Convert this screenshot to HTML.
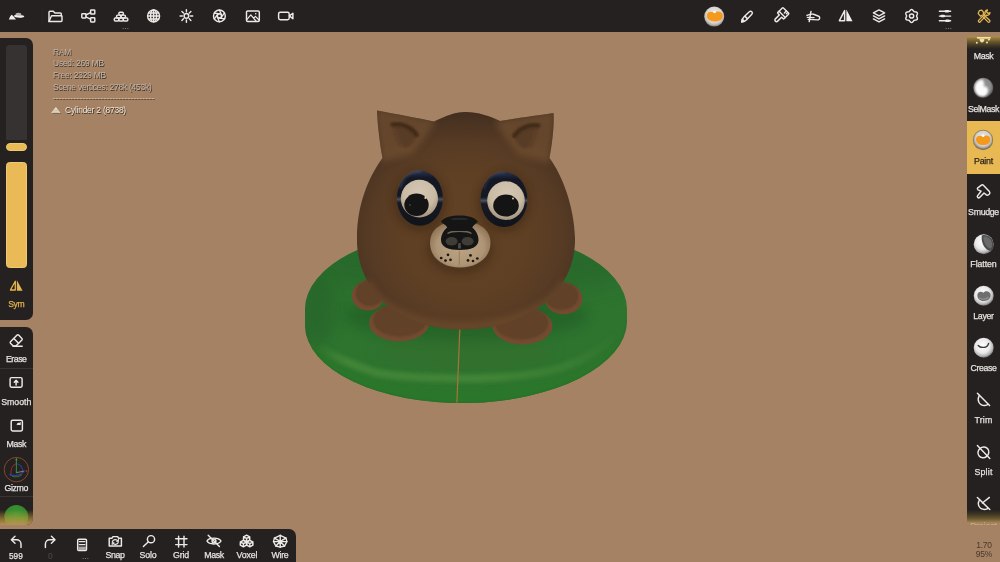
<!DOCTYPE html>
<html lang="en">
<head>
<meta charset="utf-8">
<title>Nomad Sculpt</title>
<style>
*{box-sizing:border-box;margin:0;padding:0}
html,body{width:1000px;height:562px;overflow:hidden}
body{background:#a68264;font-family:"Liberation Sans",sans-serif;position:relative;color:#e4e0dc}
.abs{position:absolute}
#topbar{left:0;top:0;width:1000px;height:32.3px;background:#242120}
#topbar svg{position:absolute;overflow:visible}
.dots{position:absolute;will-change:transform;font-size:8px;line-height:8px;color:#b5b1ad;letter-spacing:0.2px}
#lp1{left:0;top:38px;width:32.6px;height:282px;background:#242120;border-radius:0 7px 7px 0}
#lp2{left:0;top:327px;width:32.6px;height:198px;background:#242120;border-radius:0 7px 7px 0;overflow:hidden}
#bbar{left:0;top:529px;width:296px;height:33px;background:#242120;border-radius:0 7px 0 0}
#rp{left:967px;top:36px;width:33px;height:489px;background:#242120;overflow:hidden}
.lbl{position:absolute;will-change:transform;-webkit-text-stroke:0.25px currentColor;font-size:9.5px;line-height:11px;text-align:center;white-space:nowrap;color:#e6e2de;letter-spacing:-0.15px}
.bl{font-size:8.8px;letter-spacing:-0.42px}
.info{position:absolute;will-change:transform;left:53px;font-size:8.5px;line-height:11px;color:#bfb3a6;text-shadow:0.7px 0.8px 0 #3a2e25;white-space:nowrap;letter-spacing:-0.25px}
svg.ic{position:absolute;overflow:visible}
.st{fill:none;stroke:#ece9e6;stroke-width:1.45;stroke-linecap:round;stroke-linejoin:round}
.fl{fill:#f2f0ee;stroke:none}
</style>
</head>
<body>

<!-- 3D MODEL -->
<svg id="model" class="abs" style="left:0;top:0" width="1000" height="562" viewBox="0 0 1000 562">
<defs>
  <filter id="b1" x="-10%" y="-10%" width="120%" height="120%"><feGaussianBlur stdDeviation="0.6"/></filter>
  <filter id="b15" x="-20%" y="-20%" width="140%" height="140%"><feGaussianBlur stdDeviation="1.2"/></filter>
  <filter id="b2" x="-20%" y="-20%" width="140%" height="140%"><feGaussianBlur stdDeviation="2"/></filter>
  <filter id="b3" x="-20%" y="-20%" width="140%" height="140%"><feGaussianBlur stdDeviation="3.5"/></filter>
  <filter id="b5" x="-30%" y="-30%" width="160%" height="160%"><feGaussianBlur stdDeviation="6"/></filter>
  <filter id="b10" x="-30%" y="-30%" width="160%" height="160%"><feGaussianBlur stdDeviation="12"/></filter>
  <radialGradient id="bodyG" gradientUnits="userSpaceOnUse" cx="466" cy="235" r="122">
    <stop offset="0" stop-color="#624225"/>
    <stop offset="0.5" stop-color="#5f4024"/>
    <stop offset="0.78" stop-color="#573b24"/>
    <stop offset="0.92" stop-color="#4e3623"/>
    <stop offset="1" stop-color="#463122"/>
  </radialGradient>
  <radialGradient id="bodyV" gradientUnits="userSpaceOnUse" cx="466" cy="100" r="75" gradientTransform="translate(466 100) scale(1 0.6) translate(-466 -100)">
    <stop offset="0" stop-color="#3e2a1c" stop-opacity="0.5"/>
    <stop offset="0.5" stop-color="#3e2a1c" stop-opacity="0.25"/>
    <stop offset="1" stop-color="#3e2a1c" stop-opacity="0"/>
  </radialGradient>
  <radialGradient id="whiteG" cx="0.5" cy="0.35" r="0.7">
    <stop offset="0" stop-color="#d4c7b3"/>
    <stop offset="0.6" stop-color="#cabba5"/>
    <stop offset="1" stop-color="#9b8a73"/>
  </radialGradient>
  <linearGradient id="ringG" x1="0" y1="0" x2="0" y2="1">
    <stop offset="0" stop-color="#2a3450"/>
    <stop offset="0.13" stop-color="#141824"/>
    <stop offset="0.46" stop-color="#151923"/>
    <stop offset="0.52" stop-color="#4a505c"/>
    <stop offset="0.58" stop-color="#171a24"/>
    <stop offset="1" stop-color="#11131a"/>
  </linearGradient>
  <radialGradient id="snoutG" cx="0.5" cy="0.55" r="0.6">
    <stop offset="0" stop-color="#bda584"/>
    <stop offset="0.65" stop-color="#ae9575"/>
    <stop offset="1" stop-color="#86694b"/>
  </radialGradient>
  <linearGradient id="hlG" gradientUnits="userSpaceOnUse" x1="316" y1="0" x2="618" y2="0">
    <stop offset="0" stop-color="#488a3a" stop-opacity="0"/>
    <stop offset="0.1" stop-color="#488a3a" stop-opacity="0.9"/>
    <stop offset="0.55" stop-color="#488a3a" stop-opacity="0.9"/>
    <stop offset="0.85" stop-color="#468838" stop-opacity="0.55"/>
    <stop offset="1" stop-color="#468838" stop-opacity="0"/>
  </linearGradient>
  <clipPath id="bodyClip"><path d="M465,112 C478,112 490,116 500,121 C518,118 540,115 553.5,113 C554.5,125 552,145 549.5,158 C562,175 574,205 575,238 C576,290 530,329.5 462,329.5 C398,329.5 356,290 357,238 C357,205 368,178 382.5,158 C380,145 377.5,125 377,110.5 C395,114 418,118 434,121.5 C446,116 455,112 465,112 Z"/></clipPath>
  <clipPath id="padClip"><ellipse cx="466" cy="309" rx="161" ry="80"/><rect x="305" y="309" width="322" height="13"/><ellipse cx="466" cy="323" rx="161" ry="80" transform="rotate(-1 466 323)"/></clipPath>
</defs>

<!-- lily pad -->
<g id="pad">
  <g clip-path="url(#padClip)">
    <rect x="300" y="225" width="332" height="182" fill="#2e742f"/>
    <!-- side face (below highlight) -->
    <path d="M300,338 C318,352 340,366 375,378 C405,386 435,388 466,388 C500,388 530,385 560,377 C592,366 615,350 632,332 L632,410 L300,410 Z" fill="#2c762c" filter="url(#b2)"/>
    <!-- darker back / left -->
    <ellipse cx="466" cy="258" rx="175" ry="40" fill="#27662b" opacity="0.7" filter="url(#b10)"/>
    <ellipse cx="316" cy="310" rx="20" ry="36" fill="#25642a" opacity="0.6" filter="url(#b5)"/>
    <!-- front centre slightly olive -->
    <ellipse cx="466" cy="352" rx="90" ry="18" fill="#366e2d" opacity="0.6" filter="url(#b5)"/>
    <!-- rim highlight -->
    <path d="M319,346 C325,351 332,355 342.4,359.800 C356,366 366,369.500 374.800,372.200 C395,377 430,378.500 466,378.500 C500,378.500 530,376 557,369 C572,364.500 590,356 604,346 C609,342 613,338 616,334" fill="none" stroke="url(#hlG)" stroke-width="8" opacity="0.9" filter="url(#b2)"/>
    <!-- bottom dark edge -->
    <path d="M303,324 A162,81 0 0 0 629,324" transform="rotate(-1 466 323)" fill="none" stroke="#245f26" stroke-width="4" opacity="0.6" filter="url(#b15)"/>
    <!-- contact shadow under body -->
    <ellipse cx="466" cy="316" rx="122" ry="24" fill="#1d5524" opacity="0.45" filter="url(#b5)"/>
  </g>
  <path d="M459.800,329 L456.900,402.500" stroke="#a8733a" stroke-width="1.2" fill="none"/>
</g>

<!-- back feet -->
<g id="feet">
  <ellipse cx="368" cy="295.6" rx="16.2" ry="15" fill="#744b31"/>
  <ellipse cx="370" cy="293" rx="14.5" ry="13" fill="#5e4028" opacity="0.9" filter="url(#b15)"/>
  <ellipse cx="563.5" cy="298.5" rx="19" ry="15.8" fill="#744b31"/>
  <ellipse cx="561.5" cy="296" rx="17.3" ry="13.8" fill="#5e4028" opacity="0.9" filter="url(#b15)"/>
  <!-- front feet -->
  <ellipse cx="399" cy="323" rx="30" ry="18.5" fill="#744b31"/>
  <ellipse cx="400" cy="320" rx="27" ry="16.5" fill="#5e4028" opacity="0.9" filter="url(#b15)"/>
  <ellipse cx="522.5" cy="326" rx="30" ry="18.5" fill="#744b31"/>
  <ellipse cx="521.5" cy="323" rx="27" ry="16.5" fill="#5e4028" opacity="0.9" filter="url(#b15)"/>
</g>

<!-- body -->
<g id="body">
  <path d="M465,112 C478,112 490,116 500,121 C518,118 540,115 553.5,113 C554.5,125 552,145 549.5,158 C562,175 574,205 575,238 C576,290 530,329.5 462,329.5 C398,329.5 356,290 357,238 C357,205 368,178 382.5,158 C380,145 377.5,125 377,110.5 C395,114 418,118 434,121.5 C446,116 455,112 465,112 Z" fill="url(#bodyG)"/>
  <path d="M465,112 C478,112 490,116 500,121 C518,118 540,115 553.5,113 C554.5,125 552,145 549.5,158 C562,175 574,205 575,238 C576,290 530,329.5 462,329.5 C398,329.5 356,290 357,238 C357,205 368,178 382.5,158 C380,145 377.5,125 377,110.5 C395,114 418,118 434,121.5 C446,116 455,112 465,112 Z" fill="url(#bodyV)"/>
  <g clip-path="url(#bodyClip)">
    <!-- lighter band along bottom edge -->
    <path d="M366,282 C380,312 420,327 462,327 C505,327 548,312 566,282" fill="none" stroke="#7a5433" stroke-width="9" opacity="0.55" filter="url(#b3)"/>
    <!-- ears: lighter face -->
    <path d="M375,108 L381,162 L412,154 L432,128 L436,120 Z" fill="#7a5734" opacity="0.6" filter="url(#b3)"/>
    <path d="M555.5,111 L550,163 L519,155 L499,129 L495,120.5 Z" fill="#7a5734" opacity="0.6" filter="url(#b3)"/>
    <!-- inner ears: pocket -->
    <path d="M393,125 C398,131 399,141 403,147 C409,149 415,143 416.500,135 C410,128 401,124.500 393,125 Z" fill="#573b25" opacity="0.85" filter="url(#b15)"/>
    <path d="M392.500,124.500 C401,122.800 412,127.500 416.800,135" stroke="#412a18" stroke-width="4.200" fill="none" opacity="1" stroke-linecap="round" filter="url(#b15)"/>
    <path d="M393.500,127 C395,134 397,141 400.500,146.500" stroke="#553a25" stroke-width="2.200" fill="none" opacity="0.6" filter="url(#b15)"/>
    <path d="M538,126 C533,132 532,142 528,148 C522,150 516,144 514.500,136 C521,129 530,125.500 538,126 Z" fill="#573b25" opacity="0.85" filter="url(#b15)"/>
    <path d="M538.500,125.500 C530,123.800 519,128.500 514.200,136" stroke="#412a18" stroke-width="4.200" fill="none" opacity="1" stroke-linecap="round" filter="url(#b15)"/>
    <path d="M537.500,128 C536,135 534,142 530.500,147.500" stroke="#553a25" stroke-width="2.200" fill="none" opacity="0.6" filter="url(#b15)"/>
    <!-- eye socket shadows -->
    <ellipse cx="420" cy="201" rx="27" ry="31" fill="#3f2917" opacity="0.55" filter="url(#b3)"/>
    <ellipse cx="504" cy="202" rx="27" ry="31" fill="#3f2917" opacity="0.55" filter="url(#b3)"/>
    <ellipse cx="460" cy="249" rx="34" ry="26" fill="#3f2917" opacity="0.5" filter="url(#b3)"/>
  </g>
</g>

<!-- eyes -->
<g id="eyeL">
  <ellipse cx="419.9" cy="198.3" rx="23" ry="27.5" fill="url(#ringG)"/>
  <path d="M400,188 C403,176 412,171.500 421,171.500" stroke="#5a6a92" stroke-width="2" fill="none" opacity="0.45" filter="url(#b15)"/>
  <ellipse cx="419.4" cy="198.6" rx="18.6" ry="18.8" fill="url(#whiteG)"/>
  <ellipse cx="416.5" cy="204.8" rx="12.2" ry="11.2" fill="#141414"/>
  <circle cx="425.3" cy="198" r="0.9" fill="#e8e0c8"/>
  <circle cx="410" cy="205" r="0.7" fill="#6a6a66"/>
</g>
<g id="eyeR">
  <ellipse cx="504" cy="199.5" rx="23.5" ry="27.5" fill="url(#ringG)"/>
  <path d="M484,189 C487,177 496,172.500 505,172.500" stroke="#5a6a92" stroke-width="2" fill="none" opacity="0.3" filter="url(#b15)"/>
  <ellipse cx="506" cy="200.6" rx="18.8" ry="19.4" fill="url(#whiteG)"/>
  <ellipse cx="506" cy="205.5" rx="12.8" ry="11" fill="#141414"/>
  <circle cx="513" cy="198.5" r="0.9" fill="#e8e0c8"/>
</g>

<!-- snout -->
<g id="snout">
  <path d="M430,243 C430,228 443,221 460,221 C477,221 490.5,228 490.5,243 C490.5,257 478,267.500 460,267.500 C442,267.500 430,257 430,243 Z" fill="url(#snoutG)"/>
  <path d="M459.3,251 L459.3,265" stroke="#8a7052" stroke-width="1" opacity="0.7"/>
  <!-- nose -->
  <path d="M440.800,221.500 C445,216.800 452,215.500 459.300,215.500 C467,215.500 474,216.800 478,221.500 C475.500,224 473,225.500 472.300,227.500 C476,230.500 478.500,235 478.500,240 C478.500,247 471,250 459.600,250 C448.500,250 441,247 441,240 C441,235 443.500,230.500 447.200,227.500 C446.500,225.500 443.500,224 440.800,221.500 Z" fill="#151515"/>
  <path d="M447.500,233.500 C452,230.500 467,230.500 471.500,233.500" stroke="#8a8470" stroke-width="1.3" fill="none" opacity="0.75" filter="url(#b1)"/>
  <path d="M452,219.500 C456,218 463,218 467,219.500" stroke="#3a4050" stroke-width="2.2" fill="none" opacity="0.8" filter="url(#b15)"/>
  <path d="M458.300,243 L460.600,243 L461,248.500 L457.900,248.500 Z" fill="#5c5a52" opacity="0.8" filter="url(#b1)"/>
  <ellipse cx="451.6" cy="241.3" rx="6" ry="4.3" fill="#3f3d36"/>
  <ellipse cx="467.6" cy="241.3" rx="6" ry="4.3" fill="#3f3d36"/>
  <g fill="#1c140e">
    <circle cx="441.2" cy="258" r="1.35"/><circle cx="448" cy="254.8" r="1.35"/><circle cx="445.5" cy="260.6" r="1.35"/><circle cx="450.5" cy="259.8" r="1.35"/>
    <circle cx="470.5" cy="255.4" r="1.35"/><circle cx="477.3" cy="258.500" r="1.35"/><circle cx="468" cy="260.4" r="1.35"/><circle cx="473" cy="261" r="1.35"/>
  </g>
</g>
</svg>

<!-- INFO TEXT -->
<div class="info" style="top:46.7px">RAM</div>
<div class="info" style="top:58px">Used: 269 MB</div>
<div class="info" style="top:69.7px">Free: 2329 MB</div>
<div class="info" style="top:81.8px">Scene vertices: 278k (453k)</div>
<div class="abs" style="left:53px;top:97.9px;width:101.5px;height:1px;background:repeating-linear-gradient(90deg,rgba(205,185,160,0.75) 0 2px,rgba(205,185,160,0.35) 2px 3px)"></div>
<div class="abs" style="left:53.6px;top:98.9px;width:101.5px;height:1px;background:repeating-linear-gradient(90deg,rgba(75,58,44,0.65) 0 2px,rgba(75,58,44,0.3) 2px 3px)"></div>
<svg class="ic" style="left:50px;top:106px" width="12" height="9" viewBox="50 106 12 9">
  <path d="M51.6,114 L55.8,107.800 L56.8,107.800 L61.4,114 Z" fill="#3a2e25" opacity="0.7"/>
  <path d="M51,113.300 L55.400,107.300 L56.400,107.300 L60.900,113.300 Z" fill="#e3d5bf"/>
  <path d="M54,110.500 H58 M52.800,112.300 H59.200" stroke="#b9a78f" stroke-width="0.5"/>
</svg>
<div class="info" style="left:65px;top:104.5px;color:#ece2d3">Cylinder 2 (8738)</div>

<!-- TOP BAR -->
<div id="topbar" class="abs">
<div class="abs" style="left:42px;top:6px;width:1px;height:20px;background:rgba(255,255,255,0.02)"></div>
<svg class="abs" style="left:0;top:0" width="1000" height="32" viewBox="0 0 1000 32">
  <!-- nomad logo -->
  <path class="fl" d="M8.8,19.4 Q10.4,15.4 11.6,14.8 Q12.6,15.2 13.6,16.6 Q14.8,18.2 16,19.4 Z"/>
  <ellipse cx="18.4" cy="14.6" rx="2.9" ry="1.9" fill="#b9b6b2"/>
  <path class="fl" d="M13.9,15.6 Q15.6,14.9 16.6,15.2 Q18.8,16.2 21.2,15.2 Q22.6,14.9 24.3,16.1 Q24.4,17.2 22.6,17.5 Q19,18 15.6,17.3 Q13.8,16.8 13.9,15.6 Z"/>
  <!-- folder -->
  <path class="st" d="M49,21.5 V12.2 a1,1 0 0 1 1,-1 h3.3 l1.6,1.7 h5.4 a1,1 0 0 1 1,1 v1.8"/>
  <path class="st" d="M49,21.5 l2.1,-5 a1.1,1.1 0 0 1 1,-.7 h9.2 a.7,.7 0 0 1 .7,.7 v4 a1,1 0 0 1 -1,1 Z"/>
  <!-- share / graph -->
  <path class="st" d="M85.8,15 L90.6,12.7 M85.8,16.9 L90.6,19.2" stroke-width="1.2"/>
  <rect class="st" x="81.8" y="13.8" width="4.2" height="4.2" rx="0.7"/>
  <rect class="st" x="90.6" y="9.9" width="4.2" height="4.2" rx="0.7"/>
  <rect class="st" x="90.6" y="17.7" width="4.2" height="4.2" rx="0.7"/>
  <!-- pyramid of boxes -->
  <g class="st" stroke-width="1.15">
    <rect x="118.9" y="12.2" width="4.4" height="2.9" rx="1"/>
    <rect x="116.6" y="15.1" width="4.4" height="2.9" rx="1"/>
    <rect x="121" y="15.1" width="4.4" height="2.9" rx="1"/>
    <rect x="114.3" y="18" width="4.5" height="3" rx="1"/>
    <rect x="118.8" y="18" width="4.5" height="3" rx="1"/>
    <rect x="123.3" y="18" width="4.5" height="3" rx="1"/>
  </g>
  <!-- globe grid -->
  <g class="st" stroke-width="1.1">
    <circle cx="153.6" cy="15.9" r="6" stroke-width="1.4"/>
    <path d="M153.6,10 V21.8 M147.8,15.9 H159.4 M148.6,12.9 H158.6 M148.6,18.9 H158.6"/>
    <ellipse cx="153.6" cy="15.9" rx="3" ry="5.9"/>
  </g>
  <!-- sun -->
  <g class="st" stroke-width="1.4">
    <circle cx="186.4" cy="15.9" r="2.3" stroke-width="1.5"/>
    <path d="M186.4,9.6 V11.8 M186.4,20 V22.2 M180.1,15.9 H182.3 M190.5,15.9 H192.7 M181.9,11.4 L183.5,13 M189.3,18.8 L190.9,20.4 M181.9,20.4 L183.5,18.8 M189.3,13 L190.9,11.4"/>
  </g>
  <!-- aperture -->
  <g class="st" stroke-width="1.5">
    <circle cx="219.4" cy="15.9" r="5.9"/>
    <circle cx="219.4" cy="15.9" r="2.1" stroke-width="1.6"/>
    <path d="M219.4,10 L221.3,14.6 M224.5,13 L221.5,16.9 M224.5,18.9 L219.6,18 M219.4,21.8 L217.5,17.2 M214.3,18.9 L217.3,14.9 M214.3,13 L219.2,13.8" stroke-width="1.3"/>
  </g>
  <!-- image -->
  <g class="st">
    <rect x="246.5" y="10.9" width="12.8" height="10.6" rx="1.2"/>
    <path d="M246.8,19.6 L250.8,14.9 L256,21 M253.6,18.2 L255.4,16.3 L259,20" stroke-width="1.2"/>
    <circle cx="255.7" cy="13.7" r="0.8" class="fl" stroke="none"/>
  </g>
  <!-- camera -->
  <g class="st">
    <rect x="278.6" y="12.3" width="10.6" height="7.4" rx="1.6"/>
    <path d="M289.4,15.9 L292.9,13.2 V18.8 Z"/>
  </g>

  <!-- paint ball -->
  <defs>
    <radialGradient id="pb" cx="0.5" cy="0.42" r="0.55">
      <stop offset="0" stop-color="#f4f2f0"/>
      <stop offset="0.7" stop-color="#d9d6d2"/>
      <stop offset="0.9" stop-color="#b9b4ae"/>
      <stop offset="1" stop-color="#8d8781"/>
    </radialGradient>
    <filter id="pbb"><feGaussianBlur stdDeviation="0.5"/></filter>
  </defs>
  <circle cx="714.2" cy="16.6" r="10" fill="url(#pb)"/>
  <path d="M706.8,15.2 C707,11.8 711,10.6 714.4,13 C717,10.400 722.4,11.400 722.8,15.400 C723.1,19.200 719.2,21.500 714.6,21.400 C710.2,21.400 706.600,19.200 706.8,15.200 Z" fill="#f59a1f" filter="url(#pbb)"/>
  <circle cx="714.6" cy="12" r="1.3" fill="#fff" filter="url(#pbb)"/>
  <!-- brush -->
  <g class="st" stroke-width="1.3">
    <path d="M741.6,22 C741.7,19.900 742.600,18.100 744.100,16.700 L749.300,11.800 a1.750,1.750 0 0 1 2.500,2.500 L746.900,19.500 C745.500,21 743.700,21.900 741.600,22 Z"/>
    <path d="M745.200,16.500 L747.100,18.400" stroke-width="1.6"/>
    <path d="M741.800,21.800 L742.400,19.300 L744.300,21.200 Z" fill="#ece9e6"/>
  </g>
  <!-- flat paintbrush -->
  <g class="st" stroke-width="1.25" transform="translate(780.6,15.9) rotate(45)">
    <path d="M-3.6,-7.6 h7.2 a.8,.8 0 0 1 .8,.8 v4.6 h-8.8 v-4.6 a.8,.8 0 0 1 .8,-.8 Z"/>
    <path d="M-4.4,-2.2 v1.6 a.8,.8 0 0 0 .8,.8 h2 v5.6 a1.6,1.6 0 0 0 3.2,0 v-5.6 h2 a.8,.8 0 0 0 .8,-.8 v-1.6"/>
    <path d="M0.6,-7.4 v2.6 M2.6,-7.4 v1.8"/>
  </g>
  <!-- stroke / stylus -->
  <g class="st" stroke-width="1.15">
    <path d="M811,11.4 C810.4,14.5 809.8,18 809.2,21.6"/>
    <path d="M807,15.4 C809.5,14.4 812,13.8 813.6,14.3 L818.6,16.2 a2,2 0 0 1 -.4,3.7 L808.2,19.4"/>
    <path d="M807.4,17.4 L814,17.6"/>
  </g>
  <!-- symmetry -->
  <path class="st" d="M844.6,10.6 V20.7 H839.4 Z" stroke-width="1.2"/>
  <path class="fl" d="M846.4,9.6 V21.3 H852.5 Z"/>
  <!-- layers -->
  <g class="st" stroke-width="1.3">
    <path d="M879,9.9 L884.6,12.9 L879,15.9 L873.4,12.9 Z"/>
    <path d="M873.4,15.9 L879,18.9 L884.6,15.9"/>
    <path d="M873.4,18.9 L879,21.9 L884.6,18.9"/>
  </g>
  <!-- settings gear -->
  <g class="st" stroke-width="1.4">
    <path d="M916.60,16.00 L916.68,16.44 L916.89,16.93 L917.15,17.49 L917.36,18.09 L917.40,18.70 L917.23,19.25 L916.84,19.67 L916.29,19.94 L915.67,20.07 L915.05,20.12 L914.53,20.18 L914.10,20.33 L913.76,20.62 L913.44,21.05 L913.09,21.55 L912.66,22.03 L912.16,22.38 L911.60,22.50 L911.04,22.38 L910.54,22.03 L910.11,21.55 L909.76,21.05 L909.44,20.62 L909.10,20.33 L908.67,20.18 L908.15,20.12 L907.53,20.07 L906.91,19.94 L906.36,19.67 L905.97,19.25 L905.80,18.70 L905.84,18.09 L906.05,17.49 L906.31,16.93 L906.52,16.44 L906.60,16.00 L906.52,15.56 L906.31,15.07 L906.05,14.51 L905.84,13.91 L905.80,13.30 L905.97,12.75 L906.36,12.33 L906.91,12.06 L907.53,11.93 L908.15,11.88 L908.67,11.82 L909.10,11.67 L909.44,11.38 L909.76,10.95 L910.11,10.45 L910.54,9.97 L911.04,9.62 L911.60,9.50 L912.16,9.62 L912.66,9.97 L913.09,10.45 L913.44,10.95 L913.76,11.38 L914.10,11.67 L914.53,11.82 L915.05,11.88 L915.67,11.93 L916.29,12.06 L916.84,12.33 L917.23,12.75 L917.40,13.30 L917.36,13.91 L917.15,14.51 L916.89,15.07 L916.68,15.56 Z"/>
    <circle cx="911.6" cy="16" r="2.1"/>
  </g>
  <!-- sliders -->
  <g class="st" stroke-width="1.25">
    <path d="M939.4,11.2 H950.6 M939.4,16.1 H950.6 M939.4,20.8 H950.6"/>
    <path d="M945.8,11.2 H948 M941.6,16.1 H943.800 M946.400,20.800 H948.600" stroke-width="2.5"/>
  </g>
  <!-- tools (yellow) -->
  <g fill="none" stroke="#e2b552" stroke-width="1.3" stroke-linecap="round" stroke-linejoin="round">
    <path d="M979.4,10.6 L981.8,10.2 L984,13 L983,14.2 L989.6,20.2 a1.2,1.2 0 0 1 -1.7,1.7 L981.6,15.4 L980.4,16.2 L978.2,13.6 Z" />
    <path d="M978.6,20.4 L985.2,13.8 C984.6,12 985.4,10.4 987.4,10 L986.6,12 L988.2,13.4 L990,12.6 C989.8,14.6 988.2,15.6 986.4,15.2 L980.2,21.9 a1.1,1.1 0 0 1 -1.6,-1.5 Z"/>
  </g>
</svg>
<div class="dots" style="left:121.5px;top:22.5px">...</div>
<div class="dots" style="left:945px;top:22.5px">...</div>
</div>

<!-- LEFT PANEL 1 -->
<div id="lp1" class="abs">
  <div class="abs" style="left:5.8px;top:6.6px;width:21.7px;height:95.4px;background:#363231;border-radius:3.5px 3.5px 0 0"></div>
  <div class="abs" style="left:5.8px;top:104.5px;width:21.7px;height:8.2px;background:#e9ba56;border:1px solid #efca75;border-radius:4.1px"></div>
  <div class="abs" style="left:5.8px;top:124px;width:21.7px;height:105.5px;background:#e9ba56;border:1px solid #efca75;border-radius:3.5px"></div>
  <svg class="ic" style="left:0;top:0" width="33" height="282" viewBox="0 38 33 282">
    <path d="M15.3,281.2 V290 H10.4 Z" fill="none" stroke="#e3b54f" stroke-width="1.3" stroke-linejoin="round"/>
    <path d="M16.9,280.2 V290.7 H22.6 Z" fill="#e3b54f"/>
  </svg>
  <div class="lbl" style="left:0;width:32.5px;top:261.3px;color:#e0b250;font-size:8.6px;letter-spacing:-0.37px">Sym</div>
</div>

<!-- LEFT PANEL 2 -->
<div id="lp2" class="abs">
  <div class="abs" style="left:0;top:41.3px;width:32.5px;height:1px;background:#383432"></div>
  <div class="abs" style="left:0;top:169px;width:32.5px;height:1px;background:#383432"></div>
  <svg class="ic" style="left:0;top:0" width="33" height="198" viewBox="0 327 33 198">
    <defs>
      <radialGradient id="gb" cx="0.5" cy="0.35" r="0.75">
        <stop offset="0" stop-color="#3c9634"/>
        <stop offset="0.5" stop-color="#36882e"/>
        <stop offset="1" stop-color="#2a6a25"/>
      </radialGradient>
      <linearGradient id="lpf" x1="0" y1="0" x2="0" y2="1">
        <stop offset="0" stop-color="#c9a33f" stop-opacity="0"/>
        <stop offset="0.55" stop-color="#c9a33f" stop-opacity="0.55"/>
        <stop offset="1" stop-color="#b48f56" stop-opacity="1"/>
      </linearGradient>
    </defs>
    <!-- erase -->
    <g class="st" stroke-width="1.35">
      <path d="M13.2,345.9 L10.5,343.2 a1.1,1.1 0 0 1 0,-1.5 L17.1,335.1 a1.1,1.1 0 0 1 1.5,0 L21.9,338.4 a1.1,1.1 0 0 1 0,1.5 L15.9,345.9 Z"/>
      <path d="M13.8,338.4 L18.6,343.2 M13.2,346.2 H22.2"/>
    </g>
    <!-- smooth -->
    <g class="st" stroke-width="1.35">
      <rect x="10.1" y="377.6" width="12" height="9.6" rx="1.4"/>
      <path d="M16.1,385 V380.6 M14.3,382.2 L16.1,380.3 L17.9,382.2"/>
    </g>
    <!-- mask -->
    <g class="st" stroke-width="1.35">
      <rect x="11.2" y="420.2" width="11.2" height="10.8" rx="1.4"/>
      <path d="M17.2,424.6 C17.6,423.2 19.2,422.8 20,424.2 M20.2,422.6 V424.4 H18.5" stroke-width="1.1"/>
    </g>
    <!-- gizmo -->
    <g opacity="0.8">
    <circle cx="16.4" cy="469.6" r="12.2" fill="none" stroke="#9a5232" stroke-width="1"/>
    <path d="M16.4,463.5 C12.6,465 10.4,469.5 11,474.8" fill="none" stroke="#a8322e" stroke-width="1.1"/>
    <path d="M16.4,463.5 C20.4,464.6 22.6,467.8 22.8,471.4" fill="none" stroke="#3540b8" stroke-width="1.1"/>
    <path d="M10.2,474.4 C13.5,476.6 20.5,475.8 23.6,471.6" fill="none" stroke="#3a46c0" stroke-width="1.2"/>
    <path d="M12,476.2 C15,477.6 19.6,477 22,474.6" fill="none" stroke="#2f8a3a" stroke-width="1"/>
    <path d="M16.4,459.2 V473.2" stroke="#38a040" stroke-width="1.1"/>
    <path d="M16.4,457.6 L17.5,460.2 H15.3 Z" fill="#48c050"/>
    <path d="M16.6,472.6 L24.4,471" stroke="#b9b5b0" stroke-width="0.8"/>
    <path d="M26.2,472.6 L27.6,470.4 L25.4,470.2 Z" fill="#c03a30"/>
    <path d="M10.6,476.2 L9,474 L11.6,473.8 Z" fill="#3a46c0"/>
    </g>
    <!-- green ball -->
    <circle cx="16.3" cy="517" r="12" fill="url(#gb)"/>
    <rect x="0" y="510" width="33" height="15" fill="url(#lpf)"/>
  </svg>
  <div class="lbl" style="left:0;width:32.5px;top:27.2px;font-size:8.8px;letter-spacing:-0.48px">Erase</div>
  <div class="lbl" style="left:0;width:32.5px;top:69.5px;font-size:8.8px;letter-spacing:-0.02px">Smooth</div>
  <div class="lbl" style="left:0;width:32.5px;top:111.5px;font-size:8.8px;letter-spacing:-0.42px">Mask</div>
  <div class="lbl" style="left:0;width:32.5px;top:155.7px;font-size:8.8px;letter-spacing:-0.34px">Gizmo</div>
</div>

<!-- BOTTOM BAR -->
<div id="bbar" class="abs">
  <svg class="ic" style="left:0;top:0" width="296" height="33" viewBox="0 529 296 33">
    <!-- undo -->
    <g class="st" stroke-width="1.9">
      <path d="M21,547.4 V544 a4.3,4.3 0 0 0 -4.3,-4.3 H12"/>
      <path d="M15,536.2 L11.4,539.7 L15,543.2"/>
    </g>
    <!-- redo -->
    <g class="st" stroke="#423e3c" stroke-width="1.9">
      <path d="M45.4,547.4 V544 a4.3,4.3 0 0 1 4.3,-4.3 H54.2"/>
      <path d="M51.4,536.2 L55,539.7 L51.4,543.2"/>
    </g>
    <!-- doc -->
    <g>
      <rect class="st" x="77.7" y="539.2" width="8.8" height="11.4" rx="1" stroke-width="1.3"/>
      <path class="st" d="M79.4,541.6 H84.8 M79.4,544.6 H84.8" stroke-width="1.3"/>
      <rect x="78.3" y="546.6" width="7.6" height="3.4" fill="#a9a6a3"/>
    </g>
    <!-- snap -->
    <g class="st" stroke-width="1.35">
      <path d="M109.2,538.2 H112 L113,536.6 H117.6 L118.6,538.2 H121.4 V546 H109.2 Z"/>
      <path d="M112.4,541.4 C113.2,539.4 116.6,539 117.8,541 M118.2,542.6 C117.4,544.6 114,545 112.8,543" stroke-width="1.3"/>
      <path d="M118.4,539.4 V541.2 H116.6 M112.2,544.6 V542.8 H114" stroke-width="1.1"/>
    </g>
    <!-- solo -->
    <g class="st" stroke-width="1.4">
      <circle cx="151" cy="539.2" r="3.6"/>
      <path d="M148.4,541.8 L143.4,546.6"/>
    </g>
    <!-- grid -->
    <g class="st" stroke-width="1.5">
      <path d="M178.6,536.3 V547 M184,536.3 V547 M175.7,538.7 H187 M175.7,544.6 H187"/>
    </g>
    <!-- mask eye -->
    <g class="st" stroke-width="1.3">
      <path d="M207,541 C209,537.4 218.6,537 221,541 C218.6,545 209,544.8 207,541 Z"/>
      <circle cx="214" cy="541" r="1.9"/>
      <path d="M208.2,535.2 L219.4,546.6" stroke-width="1.4"/>
    </g>
    <!-- voxel -->
    <g class="st" stroke-width="1.05">
      <path d="M246.6,535.2 L249.7,536.8 V540.2 L246.6,541.8 L243.5,540.2 V536.8 Z M243.5,536.8 L246.6,538.4 L249.7,536.8 M246.6,538.4 V541.8"/>
      <path d="M243.4,540.4 L246.5,542 V545.2 L243.4,546.8 L240.3,545.2 V542 Z M240.3,542 L243.4,543.6 L246.5,542 M243.4,543.6 V546.8"/>
      <path d="M249.8,540.4 L252.9,542 V545.2 L249.8,546.8 L246.7,545.2 V542 Z M246.7,542 L249.8,543.6 L252.9,542 M249.8,543.6 V546.8"/>
    </g>
    <!-- wire -->
    <g class="st" stroke-width="1.1">
      <path d="M280.2,535.3 L286,538.1 L286.9,541.6 L284.6,546 L280.2,547.2 L275.8,546 L273.5,541.6 L274.4,538.1 Z" stroke-width="1.35"/>
      <path d="M280.2,535.3 V547.2 M273.5,541.6 H286.9 M274.4,538.1 L280.2,541.4 L286,538.1 M275.8,546 L280.2,541.4 L284.6,546"/>
    </g>
  </svg>
  <div class="lbl bl" style="left:6.4px;width:20px;top:21.5px;font-size:8.3px;letter-spacing:0.13px">599</div>
  <div class="lbl bl" style="left:39.6px;width:20px;top:21.5px;font-size:8.3px;color:#454240">0</div>
  <div class="dots" style="left:82.3px;top:23.7px">...</div>
  <div class="lbl bl" style="left:100.3px;width:30px;top:21.2px;letter-spacing:-0.33px">Snap</div>
  <div class="lbl bl" style="left:133px;width:30px;top:21.2px;letter-spacing:-0.20px">Solo</div>
  <div class="lbl bl" style="left:166px;width:30px;top:21.2px;letter-spacing:-0.20px">Grid</div>
  <div class="lbl bl" style="left:199.2px;width:30px;top:21.2px;letter-spacing:-0.42px">Mask</div>
  <div class="lbl bl" style="left:232px;width:30px;top:21.2px;letter-spacing:-0.14px">Voxel</div>
  <div class="lbl bl" style="left:265px;width:30px;top:21.2px;letter-spacing:-0.33px">Wire</div>
</div>

<!-- RIGHT PANEL -->
<div id="rp" class="abs">
  <div class="abs" style="left:0;top:84.5px;width:33px;height:53px;background:#e8b852"></div>
  <svg class="ic" style="left:0;top:0" width="33" height="490" viewBox="967 36 33 490">
    <defs>
      <linearGradient id="rpt" x1="0" y1="0" x2="0" y2="1">
        <stop offset="0" stop-color="#b3914c" stop-opacity="1"/>
        <stop offset="0.35" stop-color="#8c7434" stop-opacity="0.8"/>
        <stop offset="1" stop-color="#6e5a28" stop-opacity="0"/>
      </linearGradient>
      <linearGradient id="rpb" x1="0" y1="0" x2="0" y2="1">
        <stop offset="0" stop-color="#6e5a28" stop-opacity="0"/>
        <stop offset="0.5" stop-color="#8c7434" stop-opacity="0.6"/>
        <stop offset="0.8" stop-color="#a6855a" stop-opacity="1"/>
        <stop offset="1" stop-color="#a78262" stop-opacity="1"/>
      </linearGradient>
      <radialGradient id="sph" cx="0.45" cy="0.4" r="0.6">
        <stop offset="0" stop-color="#ffffff"/>
        <stop offset="0.6" stop-color="#e9e9e9"/>
        <stop offset="0.85" stop-color="#b5b5b5"/>
        <stop offset="1" stop-color="#6e6e6e"/>
      </radialGradient>
      <radialGradient id="sphG" cx="0.5" cy="0.45" r="0.55">
        <stop offset="0" stop-color="#9a9a9a"/>
        <stop offset="0.7" stop-color="#8a8a8a"/>
        <stop offset="1" stop-color="#4a4a4a"/>
      </radialGradient>
      <radialGradient id="sphP" cx="0.5" cy="0.42" r="0.55">
        <stop offset="0" stop-color="#f2f0ee"/>
        <stop offset="0.7" stop-color="#d5d2ce"/>
        <stop offset="0.9" stop-color="#a9a49e"/>
        <stop offset="1" stop-color="#7d7771"/>
      </radialGradient>
      <filter id="rb1"><feGaussianBlur stdDeviation="0.55"/></filter>
      <filter id="rb2"><feGaussianBlur stdDeviation="0.9"/></filter>
    </defs>
    <!-- top fade + clipped icon -->
    <rect x="967" y="36" width="33" height="13" fill="url(#rpt)"/>
    <g fill="#f3dfa6">
      <path d="M976.6,37 H991 L990.2,38.8 H977.4 Z"/>
      <circle cx="976.8" cy="42.8" r="1"/><circle cx="987" cy="42.6" r="1"/>
      <path d="M979.6,39 C979.6,43.6 984.4,43.6 984.4,39 Z"/>
      <path d="M987.6,39 L990.4,39 L988.8,41 Z"/>
    </g>
    <!-- SelMask ball -->
    <circle cx="983.3" cy="87.8" r="10" fill="url(#sphG)"/>
    <path d="M982.6,79.4 C978,79.6 974.6,83.6 974.8,88.4 C975,93 978.6,96.6 982.8,96.4 C986.6,96.2 988.6,92.6 988,89 C987.6,86.8 985.4,86.4 983.6,86.2 C984.6,84.2 984,81.4 982.6,79.4 Z" fill="#fbfbfb" filter="url(#rb2)"/>
    <!-- Paint ball -->
    <circle cx="983" cy="140" r="10.2" fill="#4d4840" opacity="0.55"/>
    <circle cx="983" cy="140" r="9.4" fill="url(#sphP)"/>
    <path d="M976,139.200 C976.200,135.600 980,134.600 983,136.800 C985.600,134.400 990.200,135.400 990.400,139.200 C990.600,142.800 987.200,145.200 983.200,145.100 C979.200,145.100 975.800,142.800 976,139.200 Z" fill="#f5991c" filter="url(#rb1)"/>
    <circle cx="983.2" cy="135.8" r="1.2" fill="#fff" filter="url(#rb1)"/>
    <!-- Smudge -->
    <g class="st" stroke-width="1.35">
      <path d="M981.4,185.2 C982.2,184.6 983,184.800 983.600,185.400 L989.400,191.600 C990.200,192.600 990,193.400 989.400,194 L988.200,195 C987.600,195.400 987,195.200 986.400,194.800 L984,193 L979.600,197.400 a1.300,1.300 0 0 1 -1.900,-1.800 L981,191.200 L978,189.800 C977.200,189.200 977.200,188.400 977.800,187.800 Z"/>
    </g>
    <!-- Flatten ball -->
    <circle cx="983.7" cy="244.2" r="10" fill="url(#sph)"/>
    <path d="M981.8,235.4 C986.6,233.6 992.6,237 993.4,243 C993.9,246.4 992.8,249.4 991.4,250.8 C986.6,251.4 980.6,244.4 981.8,235.4 Z" fill="#4e4e4e" filter="url(#rb1)"/>
    <path d="M983.4,236.6 C986.8,235.8 991.2,238.6 991.9,243 C992.3,245.6 991.6,247.6 990.8,248.6 C987.4,248.6 983,243 983.4,236.6 Z" fill="#6a6a6a" filter="url(#rb1)"/>
    <!-- Layer ball -->
    <circle cx="983.7" cy="295.8" r="10" fill="url(#sph)"/>
    <path d="M977.4,294.4 C978,291.4 981.2,290.8 983.6,292.8 C985.6,290.2 990.2,291.2 990.6,294.8 C991,298.6 987.6,301.2 983.6,301 C979.8,300.8 976.8,298.2 977.4,294.4 Z" fill="#6e6e6e" filter="url(#rb1)"/>
    <path d="M979,297.6 C981,299.8 986.4,299.8 988.6,297" stroke="#8c8c8c" stroke-width="1.4" fill="none" filter="url(#rb1)"/>
    <!-- Crease ball -->
    <circle cx="983.7" cy="347.8" r="10" fill="url(#sph)"/>
    <path d="M978.2,345.6 C980.6,348.4 987.4,348.6 988.6,343.4" fill="none" stroke="#3a3a3a" stroke-width="1.5" stroke-linecap="round" filter="url(#rb1)"/>
    <!-- Trim -->
    <g class="st" stroke-width="1.35">
      <path d="M977.4,393.2 L989.6,405.6"/>
      <path d="M979.4,395.4 C976.6,400 979,405.6 984.8,405.4 C986.2,405.4 987.2,405 988,404.4"/>
    </g>
    <!-- Split -->
    <g class="st" stroke-width="1.35">
      <path d="M977.4,445.6 L989.8,458.6"/>
      <ellipse cx="983.4" cy="452.4" rx="5.6" ry="5.2" transform="rotate(-40 983.4 452.4)"/>
    </g>
    <!-- Project -->
    <g class="st" stroke-width="1.35">
      <path d="M977.4,497.4 L989.8,509.6"/>
      <path d="M989.4,497.4 L982.4,503"/>
      <path d="M979.6,499.8 C976.8,504 979,509.6 984.8,509.4 C986.2,509.4 987.2,509 988,508.4"/>
    </g>
    <rect x="967" y="510" width="33" height="16" fill="url(#rpb)"/>
  </svg>
  <div class="lbl bl" style="left:0;width:33px;top:15.2px;letter-spacing:-0.42px">Mask</div>
  <div class="lbl bl" style="left:0;width:33px;top:67.6px;letter-spacing:-0.37px">SelMask</div>
  <div class="lbl bl" style="left:0;width:33px;top:119.6px;color:#2b2520;letter-spacing:-0.22px">Paint</div>
  <div class="lbl bl" style="left:0;width:33px;top:171.4px;letter-spacing:-0.33px">Smudge</div>
  <div class="lbl bl" style="left:0;width:33px;top:223.4px;letter-spacing:-0.09px">Flatten</div>
  <div class="lbl bl" style="left:0;width:33px;top:275.4px;letter-spacing:-0.32px">Layer</div>
  <div class="lbl bl" style="left:0;width:33px;top:327.4px;letter-spacing:-0.37px">Crease</div>
  <div class="lbl bl" style="left:0;width:33px;top:379.2px;letter-spacing:0.20px">Trim</div>
  <div class="lbl bl" style="left:0;width:33px;top:431.2px;letter-spacing:0.20px">Split</div>
  <div class="lbl bl" style="left:0;width:33px;top:484.6px;color:#d9c49a;opacity:0.6;letter-spacing:-0.09px">Project</div>
</div>

<div class="abs" style="left:970px;top:541.2px;width:28px;text-align:center;font-size:8.5px;line-height:9px;color:#4a382c;will-change:transform;letter-spacing:-0.2px">1.70<br>95%</div>
</body>
</html>
